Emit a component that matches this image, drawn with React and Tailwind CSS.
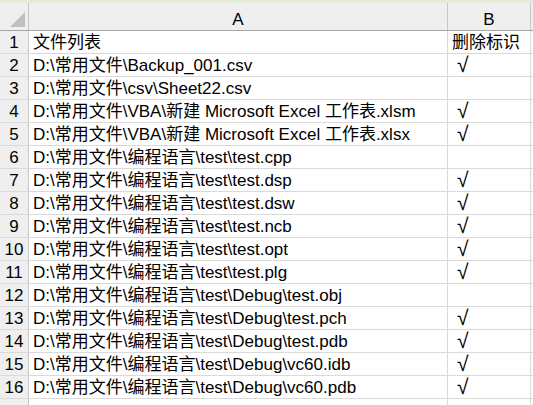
import React from "react";

const rows = [
  ["文件列表", "删除标识"],
  ["D:\\常用文件\\Backup_001.csv", "√"],
  ["D:\\常用文件\\csv\\Sheet22.csv", ""],
  ["D:\\常用文件\\VBA\\新建 Microsoft Excel 工作表.xlsm", "√"],
  ["D:\\常用文件\\VBA\\新建 Microsoft Excel 工作表.xlsx", "√"],
  ["D:\\常用文件\\编程语言\\test\\test.cpp", ""],
  ["D:\\常用文件\\编程语言\\test\\test.dsp", "√"],
  ["D:\\常用文件\\编程语言\\test\\test.dsw", "√"],
  ["D:\\常用文件\\编程语言\\test\\test.ncb", "√"],
  ["D:\\常用文件\\编程语言\\test\\test.opt", "√"],
  ["D:\\常用文件\\编程语言\\test\\test.plg", "√"],
  ["D:\\常用文件\\编程语言\\test\\Debug\\test.obj", ""],
  ["D:\\常用文件\\编程语言\\test\\Debug\\test.pch", "√"],
  ["D:\\常用文件\\编程语言\\test\\Debug\\test.pdb", "√"],
  ["D:\\常用文件\\编程语言\\test\\Debug\\vc60.idb", "√"],
  ["D:\\常用文件\\编程语言\\test\\Debug\\vc60.pdb", "√"],
  ["", ""],
];

export default function App() {
  return (
    <div
      className="w-[533px] h-[405px] overflow-hidden bg-white text-black"
      style={{ fontFamily: '"Liberation Sans", "Noto Sans CJK SC", sans-serif' }}
    >
      <div className="h-[3px] bg-[#e6ecdc]" />
      <div className="flex h-[28px] bg-[#efefef] border-b border-[#a6a6a6]">
        <div className="w-[29px] shrink-0 border-r border-[#c6c6c6] relative">
          <div className="absolute right-[3px] bottom-[3px] w-0 h-0 border-l-[15px] border-l-transparent border-b-[15px] border-b-[#bfbfbf]" />
        </div>
        <div className="w-[419px] shrink-0 border-r border-[#c6c6c6] flex items-end justify-center text-[17px] leading-[20px]">
          A
        </div>
        <div className="w-[83px] shrink-0 border-r border-[#c6c6c6] flex items-end justify-center text-[17px] leading-[20px]">
          B
        </div>
        <div className="flex-1" />
      </div>
      {rows.map((r, i) => (
        <div key={i} className="flex h-[23px] border-b border-[#dadada]">
          <div className="w-[29px] shrink-0 bg-[#efefef] border-r border-[#c6c6c6] flex items-end justify-center text-[17px] leading-[20px]">
            {i < 16 ? i + 1 : ""}
          </div>
          <div className="w-[419px] shrink-0 border-r border-[#dadada] flex items-end pl-[4px] text-[17px] leading-[20px] whitespace-nowrap">
            {r[0]}
          </div>
          {i === 0 ? (
            <div className="w-[83px] shrink-0 border-r border-[#dadada] flex items-end pl-[4px] text-[17px] leading-[20px] whitespace-nowrap">
              {r[1]}
            </div>
          ) : (
            <div className="w-[83px] shrink-0 border-r border-[#dadada] flex items-end pl-[9px] text-[21px] leading-[22px] whitespace-nowrap">
              {r[1]}
            </div>
          )}
          <div className="flex-1" />
        </div>
      ))}
    </div>
  );
}
